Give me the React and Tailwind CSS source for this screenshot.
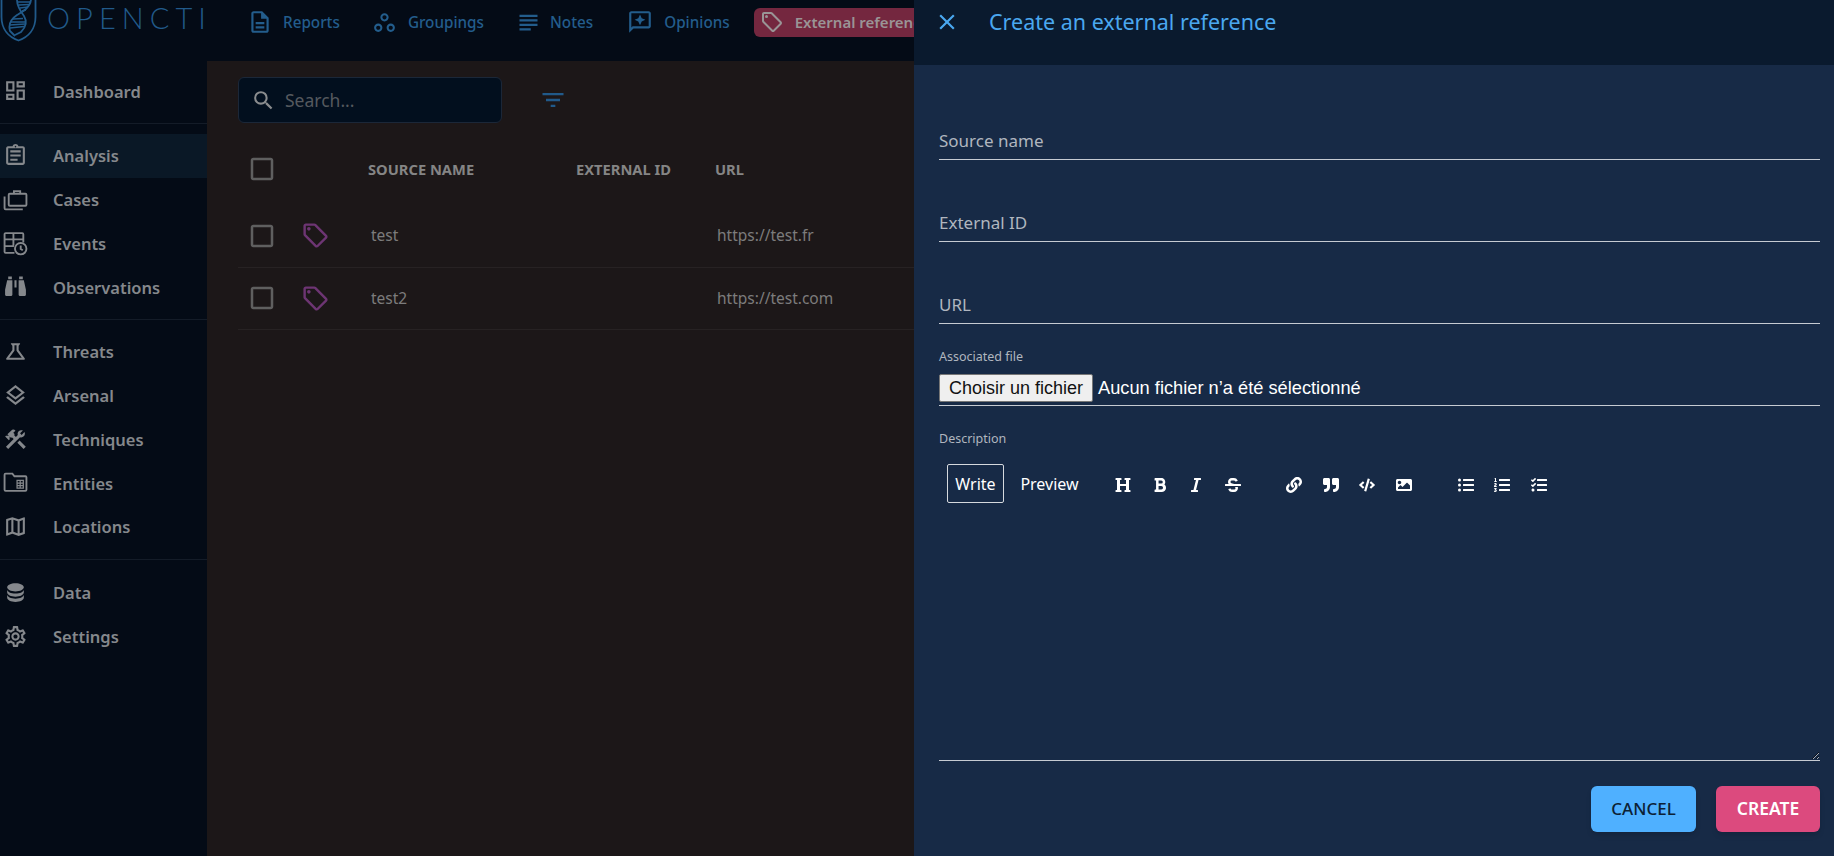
import React from 'react';
import {
  MdOutlineDashboard, MdOutlineAssignment, MdOutlineScience, MdOutlineLayers, MdOutlineConstruction,
  MdOutlineMap, MdOutlineSettings, MdOutlineDescription, MdOutlineWorkspaces, MdSubject, MdOutlineReviews,
  MdOutlineLocalOffer, MdSearch, MdFilterList, MdClose, MdCheckBoxOutlineBlank,
} from 'react-icons/md';
import {
  FaHeading, FaBold, FaItalic, FaStrikethrough, FaLink, FaQuoteRight, FaCode, FaImage, FaListUl, FaListOl, FaTasks,
} from 'react-icons/fa';

function CasesIcon({ size }) {
  return (
    <svg viewBox="0 0 24 24" width={size} height={size} fill="none" stroke="currentColor" strokeWidth="1.8">
      <rect x="5.5" y="6.5" width="17" height="11.5" rx="1" />
      <path d="M10.5 6.5V4h6v2.5M1.5 9v11.500a1 1 0 0 0 1 1H19" />
    </svg>
  );
}

function EventsIcon({ size }) {
  return (
    <svg viewBox="0 0 24 24" width={size} height={size} fill="none" stroke="currentColor" strokeWidth="1.8">
      <path d="M11 21H2.500a1 1 0 0 1-1-1V3a1 1 0 0 1 1-1h16a1 1 0 0 1 1 1v8" />
      <path d="M1.500 8h18M1.500 14.500h9M10 2v12" />
      <circle cx="17" cy="17" r="5.500" />
      <path d="M17 14v3.200l2 1.300" />
    </svg>
  );
}

function EntitiesIcon({ size }) {
  return (
    <svg viewBox="0 0 24 24" width={size} height={size} fill="none" stroke="currentColor" strokeWidth="1.8">
      <path d="M1.500 6V19a1 1 0 0 0 1 1h19a1 1 0 0 0 1-1V7a1 1 0 0 0-1-1H11L9 3.500H2.500a1 1 0 0 0-1 1z" />
      <path d="M13.500 10h6v7.500h-6zM16.500 10v7.500M13.500 12.500h6M13.500 15h6" strokeWidth="1.200" />
    </svg>
  );
}

function BinocularsIcon({ size }) {
  return (
    <svg viewBox="0 0 24 24" width={size} height={size} fill="currentColor">
      <path d="M11 6h2v7h-2zM9 20a1 1 0 0 1-1 1H3a1 1 0 0 1-1-1v-5l2-9h5zM15 20V6h5l2 9v5a1 1 0 0 1-1 1h-5a1 1 0 0 1-1-1zM5 2.500h3.500V5H5zM15.500 2.500H19V5h-3.500z" />
    </svg>
  );
}

function DatabaseIcon({ size }) {
  return (
    <svg viewBox="0 0 24 24" width={size} height={size} fill="currentColor">
      <path d="M12 3C7.580 3 4 4.790 4 7s3.580 4 8 4 8-1.790 8-4-3.580-4-8-4M4 9v3c0 2.210 3.580 4 8 4s8-1.790 8-4V9c0 2.210-3.580 4-8 4s-8-1.790-8-4m0 5v3c0 2.210 3.580 4 8 4s8-1.790 8-4v-3c0 2.210-3.580 4-8 4s-8-1.790-8-4z" />
    </svg>
  );
}

function LogoMark() {
  return (
    <svg viewBox="0 0 37 42" fill="none" stroke="#215a8a" className="w-[37px] h-[42px] shrink-0">
      <path d="M1.500 0v17c0 12 7 20 17 23.500C28.500 37 35.500 29 35.500 17V0" strokeWidth="1.800" />
      <path d="M31 0c-1 8-9 12-14 15C11 19 8 24 10 31l5 5" strokeWidth="1.800" />
      <path d="M17 0c0 6 4 12 7 16 3 5 2 11-3 16l-6 3" strokeWidth="1.800" />
      <path d="M18 2h12M18.500 5l11-.5M20 8l8-1M22 11l4-1M13 19l10-.5M10 22l15 0M9.500 25l15.500-1M10 28l14-1.500" strokeWidth="1.300" />
    </svg>
  );
}

const navItems = [
  { label: 'Reports', Icon: MdOutlineDescription, size: 26, cls: 'gap-[10px] mr-[32px]' },
  { label: 'Groupings', Icon: MdOutlineWorkspaces, size: 25, cls: 'gap-[11px] mr-[31px]' },
  { label: 'Notes', Icon: MdSubject, size: 27, cls: 'gap-[8px] mr-[34px]' },
  { label: 'Opinions', Icon: MdOutlineReviews, size: 26, cls: 'gap-[11px] mr-[24px]' },
];

const menuGroups = [
  { pad: 'pt-[8px] pb-[10px]', items: [{ label: 'Dashboard', Icon: MdOutlineDashboard }] },
  {
    pad: 'py-[10px]',
    items: [
      { label: 'Analysis', Icon: MdOutlineAssignment, active: true },
      { label: 'Cases', Icon: CasesIcon },
      { label: 'Events', Icon: EventsIcon },
      { label: 'Observations', Icon: BinocularsIcon },
    ],
  },
  {
    pad: 'pt-[10px] pb-[10px]',
    items: [
      { label: 'Threats', Icon: MdOutlineScience },
      { label: 'Arsenal', Icon: MdOutlineLayers },
      { label: 'Techniques', Icon: MdOutlineConstruction },
      { label: 'Entities', Icon: EntitiesIcon },
      { label: 'Locations', Icon: MdOutlineMap },
    ],
  },
  {
    pad: 'pt-[11px]',
    items: [
      { label: 'Data', Icon: DatabaseIcon },
      { label: 'Settings', Icon: MdOutlineSettings },
    ],
  },
];

const toolbar = [
  [FaHeading, FaBold, FaItalic, FaStrikethrough],
  [FaLink, FaQuoteRight, FaCode, FaImage],
  [FaListUl, FaListOl, FaTasks],
];

const rows = [
  { name: 'test', url: 'https://test.fr' },
  { name: 'test2', url: 'https://test.com' },
];

function TopBar() {
  return (
    <header className="h-[61px] shrink-0 bg-[#040b16] flex items-start overflow-hidden">
      <div className="flex items-start w-[247px] shrink-0">
        <LogoMark />
        <span className="ml-[10px] mt-[2px] text-[29px] leading-[32px] font-light tracking-[0.21em] text-[#215a8a] font-['Lato',sans-serif]">
          OPENCTI
        </span>
      </div>
      <nav className="flex items-center h-[44px] whitespace-nowrap">
        {navItems.map(({ label, Icon, size, cls }) => (
          <div key={label} className={`flex items-center text-[15.250px] font-medium text-[#235d8c] ${cls}`}>
            <Icon size={size} />
            <span>{label}</span>
          </div>
        ))}
        <div className="flex items-center gap-[11px] h-[29px] w-[240px] rounded-[6px] bg-[#74273f] pl-[6px] text-[15px] font-semibold text-[#9a9496]">
          <MdOutlineLocalOffer size={24} />
          <span>External references</span>
        </div>
      </nav>
    </header>
  );
}

function Sidebar() {
  return (
    <aside className="w-[207px] shrink-0 bg-[#040b16] text-[#85888c]">
      {menuGroups.map((group, i) => (
        <div key={i} className={`${group.pad} ${i < 3 ? 'border-b border-[#141c28]' : ''}`}>
          {group.items.map(({ label, Icon, active }) => (
            <div key={label} className={`flex items-center h-[43.75px] pl-[3px] text-[16.5px] font-semibold ${active ? 'bg-[#0a1826]' : ''}`}>
              <span className="w-[25px] flex justify-center shrink-0">
                <Icon size={25} />
              </span>
              <span className="ml-[25px] pt-[2px]">{label}</span>
            </div>
          ))}
        </div>
      ))}
    </aside>
  );
}

function ExternalReferences() {
  return (
    <main className="flex-1 bg-[#1c1718] pl-[31px] pt-[16px] min-w-0">
      <div className="flex items-center">
        <div className="flex items-center w-[264px] h-[46px] rounded-[6px] border border-[#1b2738] bg-[#020f1e] pl-[12px]">
          <MdSearch size={25} className="text-[#8a8c8e] shrink-0" />
          <span className="ml-[9px] text-[17.500px] text-[#55595e]">Search...</span>
        </div>
        <MdFilterList size={28} className="ml-[37px] text-[#215a8a]" />
      </div>
      <div className="flex items-center h-[48px] mt-[22px] mb-[12px] pl-[9px] text-[14.700px] font-bold text-[#858585]">
        <MdCheckBoxOutlineBlank size={30} className="text-[#5f5f5f] shrink-0" />
        <span className="ml-[91px] w-[208px] shrink-0">SOURCE NAME</span>
        <span className="w-[139px] shrink-0">EXTERNAL ID</span>
        <span>URL</span>
      </div>
      {rows.map(row => (
        <div key={row.name} className="flex items-center h-[62.500px] pl-[9px] border-b border-[#272223] text-[15.500px] text-[#7c7c7c]">
          <MdCheckBoxOutlineBlank size={30} className="text-[#5f5f5f] shrink-0" />
          <MdOutlineLocalOffer size={29} className="ml-[24px] text-[#6d3573] shrink-0" />
          <span className="ml-[41px] w-[346px] shrink-0">{row.name}</span>
          <span>{row.url}</span>
        </div>
      ))}
    </main>
  );
}

function Field({ label }) {
  return (
    <div className="mt-[46px] first:mt-[59px] h-[36px] pb-[2px] flex items-center border-b border-[#c6cbd2] text-[17px] text-[#b0b6bf]">
      {label}
    </div>
  );
}

function CreatePanel() {
  return (
    <section className="absolute top-0 right-0 w-[920px] h-full bg-[#172a46] flex flex-col">
      <div className="h-[65px] shrink-0 bg-[#0a1a2e] flex items-start pt-[9px] pl-[20px] text-[#4aa8f0]">
        <MdClose size={26} />
        <h2 className="ml-[29px] text-[21.500px] leading-[26px] font-normal">Create an external reference</h2>
      </div>
      <form className="flex-1 pl-[25px] pr-[14px] flex flex-col">
        <Field label="Source name" />
        <Field label="External ID" />
        <Field label="URL" />

        <label className="mt-[25px] text-[12.500px] leading-[16px] text-[#b0b6bf]">Associated file</label>
        <div className="mt-[9px] pb-[3px] flex items-center border-b border-[#c6cbd2] font-['Liberation_Sans',sans-serif] text-[18px] text-white">
          <button type="button" className="h-[28px] w-[154px] shrink-0 rounded-[2px] border border-[#767676] bg-[#efefef] text-[#111]">
            Choisir un fichier
          </button>
          <span className="ml-[5px] text-[18.250px]">Aucun fichier n’a été sélectionné</span>
        </div>

        <label className="mt-[25px] text-[12.500px] leading-[16px] text-[#b0b6bf]">Description</label>
        <div className="mt-[17px] ml-[8px] flex items-center h-[39px] text-white text-[16px]">
          <button type="button" className="w-[57px] h-full rounded-[2px] border border-[#d5d9de] text-center">Write</button>
          <button type="button" className="w-[91px] h-full text-center">Preview</button>
          {toolbar.map((group, i) => (
            <div key={i} className={`flex items-center pt-[2px] ${i === 0 ? 'ml-[10px]' : i === 1 ? 'ml-[25px]' : 'ml-[25.5px]'}`}>
              {group.map((Icon, j) => (
                <span key={j} className="w-[36.5px] flex justify-center">
                  <Icon size={16} />
                </span>
              ))}
            </div>
          ))}
        </div>
        <textarea className="h-[258px] shrink-0 bg-transparent border-b border-[#c6cbd2] outline-none text-white" />

        <div className="mt-[25px] flex justify-end gap-[20px]">
          <button type="button" className="w-[105px] h-[46px] pb-[1px] rounded-[6px] bg-[#4fb0ff] text-[17px] text-[#0c2135] font-medium shadow-md">CANCEL</button>
          <button type="button" className="w-[104px] h-[46px] pb-[1px] rounded-[6px] bg-[#dc4a7e] text-[17.500px] text-white font-semibold shadow-md">CREATE</button>
        </div>
      </form>
    </section>
  );
}

export default function App() {
  return (
    <div className="relative h-[856px] overflow-hidden flex flex-col font-['Noto_Sans',sans-serif]">
      <TopBar />
      <div className="flex flex-1 min-h-0">
        <Sidebar />
        <ExternalReferences />
      </div>
      <CreatePanel />
    </div>
  );
}
